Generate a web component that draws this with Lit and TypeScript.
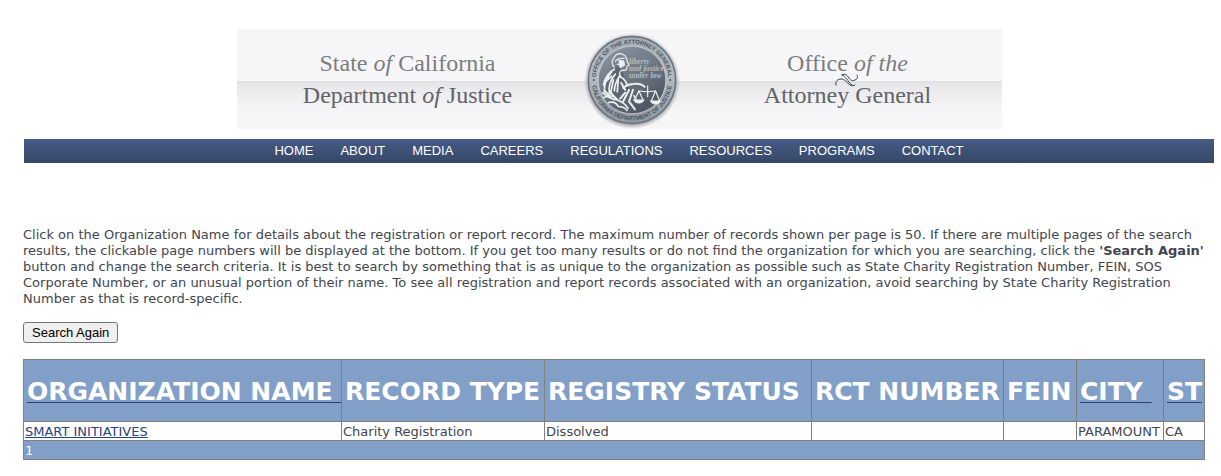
import { LitElement, html, css } from "lit";
import { customElement } from "lit/decorators.js";

const NAV = ["HOME", "ABOUT", "MEDIA", "CAREERS", "REGULATIONS", "RESOURCES", "PROGRAMS", "CONTACT"];

const COLUMNS = [
  { label: "ORGANIZATION NAME", sortable: true, gap: true, width: 318 },
  { label: "RECORD TYPE", sortable: false, gap: false, width: 203 },
  { label: "REGISTRY STATUS", sortable: false, gap: false, width: 267 },
  { label: "RCT NUMBER", sortable: false, gap: false, width: 192 },
  { label: "FEIN", sortable: false, gap: false, width: 73 },
  { label: "CITY", sortable: true, gap: true, width: 87 },
  { label: "ST", sortable: true, gap: false, width: 41 },
];

const ROWS = [["SMART INITIATIVES", "Charity Registration", "Dissolved", "", "", "PARAMOUNT", "CA"]];

@customElement("doj-seal")
export class DojSeal extends LitElement {
  static styles = css`
    :host { display: block; width: 98px; height: 98px; }
    svg { display: block; width: 100%; height: 100%; }
    .ring { font: bold 6px "Liberation Sans", Arial, sans-serif; fill: #4a545f; }
    .motto { font: italic bold 8px "Liberation Serif", serif; fill: #b4bbc2; }
  `;
  render() {
    return html`<svg viewBox="0 0 100 100" role="img" aria-label="Office of the Attorney General seal">
      <defs>
        <linearGradient id="rim" x1="0" y1="0" x2="0" y2="1">
          <stop offset="0" stop-color="#a3abb3" /><stop offset=".45" stop-color="#b6bcc3" /><stop offset="1" stop-color="#8c959e" />
        </linearGradient>
        <linearGradient id="disc" x1="0" y1="0" x2="0.6" y2="1">
          <stop offset="0" stop-color="#8f99a2" /><stop offset=".5" stop-color="#707b86" /><stop offset="1" stop-color="#4c5763" />
        </linearGradient>
        <radialGradient id="shade"><stop offset=".88" stop-color="#555" stop-opacity=".6" /><stop offset="1" stop-color="#777" stop-opacity="0" /></radialGradient>
        <path id="top" d="M13 50a37 37 0 0 1 74 0" />
        <path id="bottom" d="M9 50a41 41 0 0 0 82 0" />
      </defs>
      <circle cx="50" cy="51" r="49" fill="url(#shade)" />
      <circle cx="50" cy="50" r="44.5" fill="url(#rim)" stroke="#65707b" stroke-width="1.500" />
      <circle cx="50" cy="50" r="34.5" fill="url(#disc)" stroke="#ccd1d5" stroke-width=".8" />
      <text class="ring" text-anchor="middle"><textPath href="#top" startOffset="50%">OFFICE OF THE ATTORNEY GENERAL</textPath></text>
      <text class="ring" text-anchor="middle"><textPath href="#bottom" startOffset="50%">CALIFORNIA DEPARTMENT OF JUSTICE</textPath></text>
      <circle cx="11" cy="50" r="1" fill="#4a545f" /><circle cx="89" cy="50" r="1" fill="#4a545f" />
      <text class="motto" x="47" y="34">liberty</text>
      <text class="motto" x="47" y="41">and justice</text>
      <text class="motto" x="47" y="48">under law</text>
      <path fill="#5a6570" d="M30 38q4-5 10 2l7 20l-13 8l-12-6q1-16 8-24z" />
      <g fill="none" stroke="#edf0f1" stroke-linecap="round" stroke-linejoin="round">
        <path stroke-width="1.200" d="M31 28q4-7 10-4q4 2 4 7l2 4l-2 1q0 5-4 4q-3 0-4 4M33 31q3-4 9-3M31 28q-3 5 1 9M35 34q3-1 3 3" />
        <path stroke-width="1.800" d="M32 39q-9 5-11 16M29 42q-8 9-7 20M33 44q-8 9-6 20M38 45q-6 9-6 16M37 46q6 3 8 9M22 53l7-7M31 50l-3 14M36 50l-1 12" />
        <path stroke-width="2" d="M41 58q5-4 10-4q8-1 12 3M43 63l-5 6M47 60l-6 12M51 60l-4 12l6 8M28 62l6 8M22 61l6 6M43 60l-4-7" />
        <path stroke-width="1.700" d="M21 68q9-5 15 3q6 2 10 8M26 73q7-2 10 4q6 0 9 4M20 63q6 5 12 7M52 66l3 6" />
        <path stroke-width="1.200" d="M66 56v11M57 61q9 2 17 0M57 61l-4 9M57 61l4 9M74 61l-4 10M74 61l4 10" />
      </g>
      <path d="M51 70h12q-2 4-6 4t-6-4zM68 71h12q-2 4-6 4t-6-4zM36 29l6 1l1 5l-5 3z" fill="#edf0f1" />
    </svg>`;
  }
}

@customElement("app-root")
export class AppRoot extends LitElement {
  static styles = css`
    :host {
      display: block;
      padding: 29px 7px 16px 23px;
      font: 13px/16px Verdana, "DejaVu Sans", sans-serif;
      color: #41454e;
      background: #fff;
    }
    header { padding-left: 1px; }
    .banner {
      display: grid;
      grid-template-columns: 342px 106px 1fr;
      align-items: center;
      max-width: 765px;
      height: 100px;
      margin: 0 auto 10px;
      background: linear-gradient(#f6f6f9 0 52px, #dedee1 52px, #e7e7e9 55px, #f6f6f9 80px);
    }
    .title {
      font: 24px/32px "Liberation Serif", "Times New Roman", serif;
      text-align: center;
      color: #626366;
      position: relative;
    }
    .title p { margin: 0; }
    .title p:first-child { color: #7c7d80; }
    .office { padding-left: 9px; }
    .seal { justify-self: center; padding-top: 2px; }
    .swash { position: absolute; left: calc(50% - 8px); top: 26px; width: 24px; height: 14px; }
    nav {
      display: flex;
      justify-content: center;
      gap: 27px;
      background: linear-gradient(#455b86, #364866);
      font: 13px/24px "Liberation Sans", Arial, sans-serif;
    }
    nav a { color: #fff; text-decoration: none; }
    main { padding-right: 9px; }
    .intro { margin: 64px 0 15px; }
    button {
      display: block;
      height: 21px;
      padding: 0 8px;
      border: 1px solid #767676;
      border-radius: 3px;
      background: #efefef;
      color: #000;
      font: 13px/19px "Liberation Sans", Arial, sans-serif;
    }
    table {
      width: 100%;
      margin-top: 16px;
      table-layout: fixed;
      border-collapse: collapse;
    }
    th, td { border: 1px solid #808080; text-align: left; white-space: nowrap; }
    th {
      height: 59px;
      padding: 2px 3px 0;
      background: #829fc8;
      color: #fff;
      font-size: 25px;
      line-height: 32px;
    }
    td { padding: 2px 1px 0; }
    .sort { text-decoration: underline #26427f 1px; text-underline-offset: 2px; color: #fff; white-space: pre; }
    .record { color: #26427f; }
    .pager td { background: #829fc8; color: #fff; }
  `;

  render() {
    return html`
      <header>
        <div class="banner">
          <div class="title"><p>State <i>of</i> California</p><p>Department <i>of</i> Justice</p></div>
          <doj-seal class="seal"></doj-seal>
          <div class="title office">
            <p>Office <i>of the</i></p><p>Attorney General</p>
            <svg class="swash" viewBox="0 0 24 14" fill="none" stroke="#343b4a" stroke-linecap="round" aria-hidden="true">
              <path stroke-width="1" d="M1 12C0 8 3 6 6 6C10 6 12 10 15 12C17 13 19 13 20 12" />
              <path stroke-width="1" d="M7 2C10 0 12 2 14 5C16 8 18 8 20 7C23 6 23 3 22 2" />
              <path stroke-width="1" d="M7 2C11 3 12 8 17 12" />
            </svg>
          </div>
        </div>
        <nav>${NAV.map((item) => html`<a href="#">${item}</a>`)}</nav>
      </header>
      <main>
        <p class="intro">
          Click on the Organization Name for details about the registration or report record. The maximum number of
          records shown per page is 50. If there are multiple pages of the search results, the clickable page numbers
          will be displayed at the bottom. If you get too many results or do not find the organization for which you
          are searching, click the <b>'Search Again'</b> button and change the search criteria. It is best to search by
          something that is as unique to the organization as possible such as State Charity Registration Number, FEIN,
          SOS Corporate Number, or an unusual portion of their name. To see all registration and report records
          associated with an organization, avoid searching by State Charity Registration Number as that is
          record-specific.
        </p>
        <button type="button">Search Again</button>
        <table>
          <colgroup>${COLUMNS.map((c) => html`<col style="width:${c.width}px" />`)}</colgroup>
          <thead>
            <tr>${COLUMNS.map((c) => html`<th scope="col">${c.sortable
              ? html`<a class="sort" href="#">${c.label}${c.gap ? "\u00a0" : ""}</a>`
              : c.label}</th>`)}</tr>
          </thead>
          <tbody>
            ${ROWS.map((row) => html`<tr>${row.map((cell, i) => html`<td>${i === 0
              ? html`<a class="record" href="#">${cell}</a>`
              : cell}</td>`)}</tr>`)}
          </tbody>
          <tfoot><tr class="pager"><td colspan="7">1</td></tr></tfoot>
        </table>
      </main>
    `;
  }
}
